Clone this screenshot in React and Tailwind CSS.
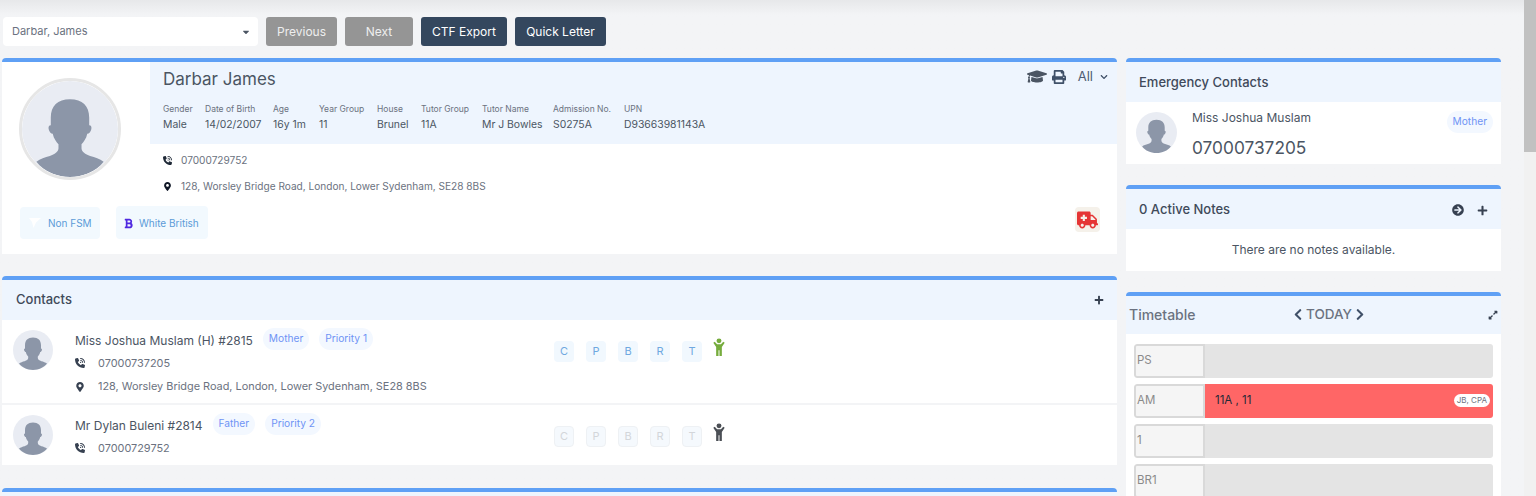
import { FaGraduationCap, FaPrint, FaChevronDown, FaChevronLeft, FaChevronRight, FaAmbulance, FaBold, FaMapMarkerAlt, FaArrowCircleRight, FaPlus, FaExpandAlt, FaCaretDown } from 'react-icons/fa';
import { FaPhoneVolume } from 'react-icons/fa6';

const facts = [
  ['Gender', 'Male', 'w-[42px]'],
  ['Date of Birth', '14/02/2007', 'w-[68px]'],
  ['Age', '16y 1m', 'w-[46px]'],
  ['Year Group', '11', 'w-[58px]'],
  ['House', 'Brunel', 'w-[44px]'],
  ['Tutor Group', '11A', 'w-[61px]'],
  ['Tutor Name', 'Mr J Bowles', 'w-[71px]'],
  ['Admission No.', 'S0275A', 'w-[71px]'],
  ['UPN', 'D93663981143A', 'w-[90px]'],
];

const rows = ['PS', 'AM', '1', 'BR1'];

function Avatar({ className }) {
  return (
    <svg viewBox="0 0 100 100" className={className}>
      <circle cx="50" cy="50" r="50" fill="#e9ecf3" />
      <path d="M50 19c-13 0-20 7-20 19v8c-2 0-3 2-2 5 1 2 2 4 4 4 1 5 4 9 6 11v4c0 4-4 6-9 8-5 1-10 3-14 6 8 10 21 16 35 16s27-6 35-16c-4-3-9-5-14-6-5-2-9-4-9-8v-4c2-2 5-6 6-11 2 0 3-2 4-4 1-3 0-5-2-5v-8c0-12-7-19-20-19z" fill="#8c96a8" />
    </svg>
  );
}

function ChildIcon({ className }) {
  return (
    <svg viewBox="0 0 14 20" fill="currentColor" className={className}>
      <circle cx="7" cy="3" r="2.6" />
      <path d="M1 5l1.5-1L5 6.5h4L11.5 4 13 5l-3 4.5V19H7.5v-6h-1v6H4V9.5z" />
    </svg>
  );
}

function Pill({ children }) {
  return <span className="flex h-[22px] items-center rounded-full bg-[#f3f8ff] px-1.5 text-[10.2px] text-[#6f94f5]">{children}</span>;
}

function Letters({ muted }) {
  return (
    <div className="flex gap-3">
      {['C', 'P', 'B', 'R', 'T'].map((l) => (
        <span
          key={l}
          className={muted
            ? 'flex h-[21px] w-[20px] items-center justify-center rounded-sm border border-[#eef1f4] bg-[#f5f9fd] text-[11px] text-[#d3d6da]'
            : 'flex h-[21px] w-[20px] items-center justify-center rounded-sm bg-[#f1f8fe] text-[11px] text-[#6fa8e0]'}
        >
          {l}
        </span>
      ))}
    </div>
  );
}

function Contact({ name, pills, phone, address, childColor, muted, className }) {
  return (
    <div className={`flex bg-white pl-[11px] ${className}`}>
      <Avatar className="mt-[10px] h-[40px] w-[40px] shrink-0" />
      <div className="ml-[22px] w-[479px] shrink-0">
        <div className="mt-[9px] flex h-[24px] items-center gap-[10px]">
          <span className="text-[12px] text-[#4b5563]">{name}</span>
          <div className="-mt-1 flex gap-[10px]">
            {pills.map((p) => <Pill key={p}>{p}</Pill>)}
          </div>
        </div>
        <div className="mt-[2px] flex items-center text-[10.9px] text-[#6b7280]">
          <span className="flex w-[23px] shrink-0"><FaPhoneVolume className="h-[10px] w-[10px] text-[#374151]" /></span>
          {phone}
        </div>
        {address && (
          <div className="mt-[7px] flex items-center text-[10.9px] text-[#6b7280]">
            <span className="flex w-[23px] shrink-0"><FaMapMarkerAlt className="h-[10px] w-[10px] text-[#374151]" /></span>
            {address}
          </div>
        )}
      </div>
      <div className="mt-[21px]"><Letters muted={muted} /></div>
      <ChildIcon className={`ml-[10px] mt-[18px] h-[19px] w-[14px] ${childColor}`} />
    </div>
  );
}

export default function App() {
  return (
    <div className="flex h-[496px] w-full overflow-hidden bg-[#f3f4f6] font-['Inter',sans-serif]">
      <div className="min-w-0 flex-1 bg-gradient-to-b from-[#e7e8ea] via-[#f3f4f6] via-[3%] to-[#f3f4f6] pl-[2px] pt-[17px]">
        <div className="flex h-[29px] items-center">
          <div className="ml-px flex h-[29px] w-[255px] items-center justify-between rounded-sm bg-white pl-[9px] pr-[7px] text-[11px] text-[#6b7280]">
            Darbar, James
            <FaCaretDown className="text-[10px] text-[#4b5563]" />
          </div>
          <button className="ml-[8px] h-[29px] w-[71px] rounded-[3px] bg-[#959595] text-[12px] text-[#eeeeee]">Previous</button>
          <button className="ml-[8px] h-[29px] w-[68px] rounded-[3px] bg-[#959595] text-[12px] text-[#eeeeee]">Next</button>
          <button className="ml-[8px] h-[29px] w-[86px] rounded-[3px] bg-[#34475e] text-[12px] text-white">CTF Export</button>
          <button className="ml-[8px] h-[29px] w-[91px] rounded-[3px] bg-[#34475e] text-[12px] text-white">Quick Letter</button>
        </div>

        <div className="mt-[12px] flex gap-[9px]">
          {/* Left column */}
          <div className="w-[1115px] shrink-0">
            <div className="relative flex h-[196px] rounded-t-sm border-t-4 border-[#5fa0f5] bg-white">
              <div className="w-[148px] shrink-0">
                <div className="ml-[17px] mt-[16px] h-[102px] w-[102px] overflow-hidden rounded-full border-[3px] border-[#e6e6e6]">
                  <Avatar className="h-full w-full" />
                </div>
                <div className="ml-[18px] mt-[27px] flex gap-[16px] whitespace-nowrap text-[10px] text-[#5b9bd8]">
                  <div className="flex h-[32px] w-[80px] shrink-0 items-center rounded-sm bg-[#f2f9fe] pl-[9px]">
                    <svg viewBox="0 0 12 12" className="mr-[7px] h-[12px] w-[12px] text-white">
                      <path d="M0 1h12L7 5.5 4.5 11 3 5z" fill="currentColor" />
                    </svg>
                    Non FSM
                  </div>
                  <div className="-mt-px flex h-[33px] w-[92px] shrink-0 items-center rounded-sm bg-[#f2f9fe] pl-[8px] pt-px">
                    <FaBold className="mr-[6px] h-[11px] w-[9px] text-[#4f28e0]" />
                    White British
                  </div>
                </div>
              </div>
              <div className="min-w-0 flex-1">
                <div className="relative h-[82px] bg-[#eef5fe] pl-[13px]">
                  <div className="pt-[6px] text-[17px] leading-[22px] text-[#4b5563]">Darbar James</div>
                  <div className="mt-[13px] flex">
                    {facts.map(([label, value, w]) => (
                      <div key={label} className={`${w} shrink-0 whitespace-nowrap`}>
                        <div className="text-[8.5px] leading-[12px] text-[#6b7280]">{label}</div>
                        <div className="mt-[3px] text-[10.4px] leading-[14px] text-[#4b5563]">{value}</div>
                      </div>
                    ))}
                  </div>
                  <div className="absolute right-[9px] top-[5px] flex items-center text-[#4b5563]">
                    <FaGraduationCap className="h-[17px] w-[20px]" />
                    <FaPrint className="ml-[5px] h-[14px] w-[14px] text-[#3f5068]" />
                    <span className="ml-[12px] text-[13px] text-[#4f5d73]">All</span>
                    <FaChevronDown className="ml-[7px] h-[8px] w-[8px] text-[#3f5068]" />
                  </div>
                </div>
                <div className="ml-[13px] mt-[9px] flex items-center text-[10.1px] text-[#6b7280]">
                  <FaPhoneVolume className="mr-[9px] h-[9px] w-[9px] text-[#1f2937]" />
                  07000729752
                </div>
                <div className="ml-[13px] mt-[11px] flex items-center text-[10.1px] text-[#6b7280]">
                  <FaMapMarkerAlt className="mr-[9px] h-[9px] w-[9px] text-[#111827]" />
                  128, Worsley Bridge Road, London, Lower Sydenham, SE28 8BS
                </div>
              </div>
              <div className="absolute right-[17px] top-[145px] flex h-[25px] w-[25px] items-center justify-center rounded-sm bg-[#f5f1ea]">
                <FaAmbulance className="h-[18px] w-[21px] text-[#e53535]" />
              </div>
            </div>

            <div className="mt-[22px] rounded-t-sm border-t-4 border-[#5fa0f5]">
              <div className="flex h-[40px] items-center justify-between bg-[#eef5fe] pl-[14px] pr-[13px]">
                <span className="text-[13px] font-medium text-[#3f4a5a]">Contacts</span>
                <FaPlus className="h-[10px] w-[10px] text-[#374151]" />
              </div>
              <Contact
                className="h-[83px]"
                name="Miss Joshua Muslam (H) #2815"
                pills={['Mother', 'Priority 1']}
                phone="07000737205"
                address="128, Worsley Bridge Road, London, Lower Sydenham, SE28 8BS"
                childColor="text-[#76ac3d]"
              />
              <Contact
                className="mt-[2px] h-[60px]"
                name="Mr Dylan Buleni #2814"
                pills={['Father', 'Priority 2']}
                phone="07000729752"
                childColor="text-[#4b4f55]"
                muted
              />
            </div>

            <div className="mt-[23px] h-[20px] rounded-t-sm border-t-4 border-[#5fa0f5] bg-[#eef5fe]" />
          </div>

          {/* Right column */}
          <div className="w-[375px] shrink-0">
            <div className="rounded-t-sm border-t-4 border-[#5fa0f5]">
              <div className="flex h-[40px] items-center bg-[#eef5fe] pl-[13px] pt-[2px] text-[13px] font-medium text-[#3f4a5a]">Emergency Contacts</div>
              <div className="flex h-[62px] bg-white pl-[10px] pr-[8px]">
                <Avatar className="mt-[10px] h-[41px] w-[41px] shrink-0" />
                <div className="ml-[15px] flex-1">
                  <div className="mt-[8px] text-[12px] leading-[16px] text-[#4b5563]">Miss Joshua Muslam</div>
                  <div className="mt-[11px] text-[17.3px] leading-[22px] text-[#4b5563]">07000737205</div>
                </div>
                <div className="mt-[9px]"><Pill>Mother</Pill></div>
              </div>
            </div>

            <div className="mt-[21px] rounded-t-sm border-t-4 border-[#5fa0f5]">
              <div className="flex h-[40px] items-center justify-between bg-[#eef5fe] pl-[13px] pr-[13px] pt-[2px]">
                <span className="text-[13px] font-medium text-[#3f4a5a]">0 Active Notes</span>
                <div className="flex items-center gap-[13px] text-[#374151]">
                  <FaArrowCircleRight className="h-[12px] w-[12px]" />
                  <FaPlus className="h-[11px] w-[11px]" />
                </div>
              </div>
              <div className="flex h-[42px] items-center justify-center bg-white text-[12px] text-[#4b5563]">There are no notes available.</div>
            </div>

            <div className="mt-[21px] rounded-t-sm border-t-4 border-[#5fa0f5]">
              <div className="relative flex h-[38px] items-center justify-center bg-[#eef5fe]">
                <span className="absolute left-[3px] -mt-[2px] text-[14px] font-medium text-[#6b7280]">Timetable</span>
                <div className="ml-[31px] -mt-[2px] flex items-center gap-[4px] text-[13.5px] font-medium text-[#6b7280]">
                  <FaChevronLeft className="h-[13px] w-[8px] text-[#3f5068]" />
                  TODAY
                  <FaChevronRight className="h-[13px] w-[8px] text-[#3f5068]" />
                </div>
                <FaExpandAlt className="absolute right-[3px] h-[10px] w-[10px] text-[#374151]" />
              </div>
              <div className="flex flex-col gap-[6px] bg-white px-[8px] pb-[8px] pt-[10px]">
                {rows.map((r) => (
                  <div key={r} className="flex h-[34px] shrink-0 overflow-hidden rounded-[3px]">
                    <div className="flex w-[71px] shrink-0 items-center rounded-l-[3px] border-2 border-[#d9d9d9] bg-[#f5f5f5] pl-px text-[11.5px] text-[#8a8a8a]">{r}</div>
                    {r === 'AM' ? (
                      <div className="flex flex-1 items-center justify-between bg-[#ff6666] pl-[10px] pr-[3px] text-[11.5px] text-[#1f2937]">
                        11A , 11
                        <span className="-mt-[2px] rounded-full bg-white px-[3px] text-[8px] leading-[13px] text-[#6b7280]">JB, CPA</span>
                      </div>
                    ) : (
                      <div className="flex-1 bg-[#e4e4e4]" />
                    )}
                  </div>
                ))}
              </div>
            </div>
          </div>
        </div>
      </div>

      {/* Scrollbar */}
      <div className="w-[12px] shrink-0 bg-[#f1f1f1]">
        <div className="h-[152px] bg-[#c1c1c1]" />
      </div>
    </div>
  );
}
